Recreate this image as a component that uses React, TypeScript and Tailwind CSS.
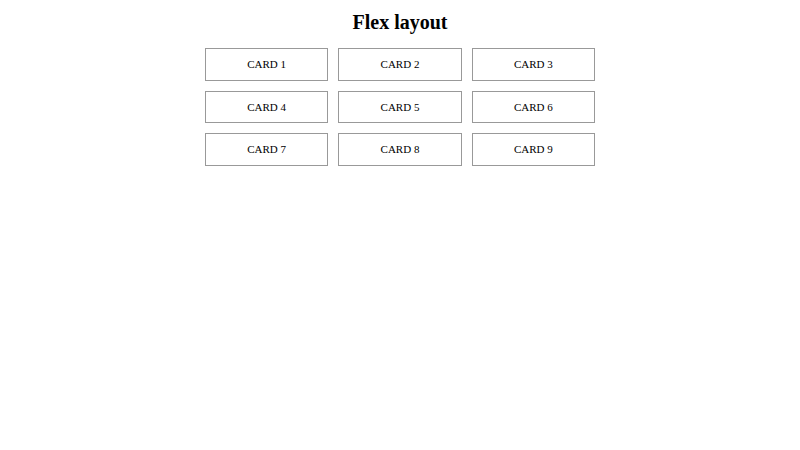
import React from 'react';

const cards = ['CARD 1', 'CARD 2', 'CARD 3', 'CARD 4', 'CARD 5', 'CARD 6', 'CARD 7', 'CARD 8', 'CARD 9'];

const App: React.FC = () => {
  return (
    <div className="min-h-[450px] bg-white text-black" style={{ fontFamily: '"Liberation Serif", "Times New Roman", serif' }}>
      <h1 className="text-center text-[20px] font-bold leading-[23px] pt-[11px] pb-[9px]">Flex layout</h1>

      {/* Cards */}
      <div className="w-[400px] mx-auto flex flex-wrap">
        {cards.map((card) => (
          <div
            key={card}
            className="w-[123.33px] h-[32.5px] m-[5px] border border-[#999999] flex items-center justify-center text-[11px]"
          >
            {card}
          </div>
        ))}
      </div>
    </div>
  );
};

export default App;
